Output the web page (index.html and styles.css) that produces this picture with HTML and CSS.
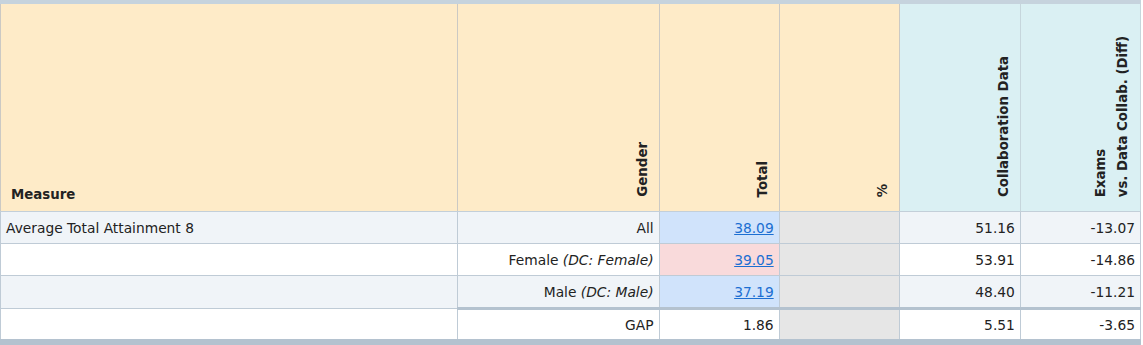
FILE: index.html
```html
<!DOCTYPE html>
<html>
<head>
<meta charset="utf-8">
<link rel="stylesheet" href="styles.css">
</head>
<body>
<table class="grid">
  <colgroup>
    <col class="c-measure">
    <col class="c-gender">
    <col class="c-num">
    <col class="c-num">
    <col class="c-num2">
    <col class="c-num">
  </colgroup>
  <thead>
    <tr>
      <th class="h h-measure">Measure</th>
      <th class="h h-rot"><span class="rot">Gender</span></th>
      <th class="h h-rot"><span class="rot">Total</span></th>
      <th class="h h-rot"><span class="rot">%</span></th>
      <th class="h h-rot h-teal"><span class="rot">Collaboration Data</span></th>
      <th class="h h-rot h-teal"><span class="rot rot2">Exams<br>vs. Data Collab. (Diff)</span></th>
    </tr>
  </thead>
  <tbody>
    <tr class="alt">
      <td class="measure">Average Total Attainment 8</td>
      <td class="num">All</td>
      <td class="num blue"><a href="#">38.09</a></td>
      <td class="pct"></td>
      <td class="num">51.16</td>
      <td class="num">-13.07</td>
    </tr>
    <tr>
      <td class="measure"></td>
      <td class="num">Female <em>(DC: Female)</em></td>
      <td class="num pink"><a href="#">39.05</a></td>
      <td class="pct"></td>
      <td class="num">53.91</td>
      <td class="num">-14.86</td>
    </tr>
    <tr class="alt">
      <td class="measure"></td>
      <td class="num">Male <em>(DC: Male)</em></td>
      <td class="num blue"><a href="#">37.19</a></td>
      <td class="pct"></td>
      <td class="num">48.40</td>
      <td class="num">-11.21</td>
    </tr>
    <tr class="gap">
      <td class="measure"></td>
      <td class="num">GAP</td>
      <td class="num">1.86</td>
      <td class="pct"></td>
      <td class="num">5.51</td>
      <td class="num">-3.65</td>
    </tr>
  </tbody>
</table>
</body>
</html>
```

FILE: styles.css
```css
html, body {
  margin: 0;
  padding: 0;
  background: #ffffff;
}

.grid {
  border-collapse: collapse;
  table-layout: fixed;
  width: 1141px;
  font-family: "DejaVu Sans", Verdana, sans-serif;
  font-size: 10pt;
  color: #222;
  border-top: 4px solid #c6d3dd;
  border-bottom: 6px solid #b4c2cf;
  border-left: 1px solid #c6ced6;
  border-right: 1px solid #c6ced6;
}

.c-measure { width: 457px; }
.c-gender { width: 201px; }
.c-num { width: 120px; }
.c-num2 { width: 121px; }

.h {
  background: #feebc8;
  height: 193px;
  vertical-align: bottom;
  border-left: 1px solid #cbc9c4;
  border-right: 1px solid #cbc9c4;
  border-bottom: 1px solid #c3cfd9;
  font-weight: bold;
  color: #222;
}

.h-measure {
  text-align: left;
  padding: 0 10px 6px 10px;
  line-height: 20px;
}

.h-rot {
  text-align: right;
  padding: 0 6px 14px 6px;
  line-height: 20px;
}

.h-teal {
  background: #daf0f3;
  border-left: 1px solid #c6d6dc;
  border-right: 1px solid #c6d6dc;
}

.rot {
  display: inline-block;
  vertical-align: bottom;
  writing-mode: vertical-rl;
  transform: rotate(180deg);
  text-align: left;
  white-space: nowrap;
}

.rot2 {
  line-height: 22px;
}

td {
  height: 31px;
  padding: 0 5px;
  border: 1px solid #bfcbd6;
  line-height: 20px;
  font-size: 13.8px;
  white-space: nowrap;
}

tr.alt td { background: #f0f4f8; }

td.measure { text-align: left; }
td.num { text-align: right; padding-right: 5px; }

td.blue, tr.alt td.blue { background: #d0e3fb; }
td.pink { background: #f9dadb; }
td.pct, tr.alt td.pct { background: #e6e6e6; }

td a {
  color: #1c6fd2;
  text-decoration: underline;
}

td em { font-style: italic; }

tr.gap td { height: 29px; }
tr.gap td:not(.measure) { border-top: 3px solid #b4c2cf; }
```
